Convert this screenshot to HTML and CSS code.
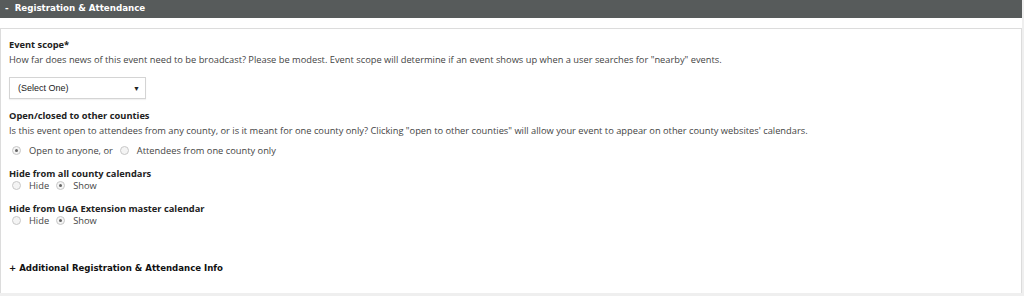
FILE: index.html
```html
<!DOCTYPE html>
<html>
<head>
<meta charset="utf-8">
<link rel="stylesheet" href="styles.css">
</head>
<body>
<div class="wrap">
  <div class="header">-&nbsp; Registration &amp; Attendance</div>
  <div class="panel">
    <div class="field">
      <div class="label">Event scope*</div>
      <div class="desc">How far does news of this event need to be broadcast? Please be modest. Event scope will determine if an event shows up when a user searches for "nearby" events.</div>
      <div class="select"><span>(Select One)</span><span class="caret">&#9660;</span></div>
    </div>
    <div class="field f2">
      <div class="label">Open/closed to other counties</div>
      <div class="desc">Is this event open to attendees from any county, or is it meant for one county only? Clicking "open to other counties" will allow your event to appear on other county websites' calendars.</div>
      <div class="radios r1">
        <span class="radio on"></span><span class="rl">Open to anyone, or</span>
        <span class="radio"></span><span class="rl">Attendees from one county only</span>
      </div>
    </div>
    <div class="field f3">
      <div class="label">Hide from all county calendars</div>
      <div class="radios rs">
        <span class="radio"></span><span class="rl">Hide</span>
        <span class="radio on"></span><span class="rl">Show</span>
      </div>
    </div>
    <div class="field f4">
      <div class="label">Hide from UGA Extension master calendar</div>
      <div class="radios rs">
        <span class="radio"></span><span class="rl">Hide</span>
        <span class="radio on"></span><span class="rl">Show</span>
      </div>
    </div>
    <div class="more">+ Additional Registration &amp; Attendance Info</div>
  </div>
</div>
</body>
</html>
```

FILE: styles.css
```css
html, body { margin: 0; padding: 0; background: #efefef; }
.wrap { width: 1022px; background: #fff; }
.header {
  height: 18px; background: #575b5b; color: #fff;
  font-family: "DejaVu Sans", sans-serif; font-weight: bold; font-size: 8.7px;
  line-height: 17px; padding-left: 5px; box-sizing: border-box;
}
.panel {
  margin-top: 10px; border: 1px solid #dcdcdc; border-bottom: none;
  height: 265px; box-sizing: border-box; padding: 9px 0 0 8px;
  font-family: "Open Sans", sans-serif; color: #333;
}
.label { font-weight: bold; font-size: 9.3px; line-height: 14px; color: #222; }
.desc { font-size: 9.3px; line-height: 14px; margin-top: 1px; color: #444; }
.select {
  margin-top: 10px; width: 137px; height: 22px; box-sizing: border-box;
  border: 1px solid #d4d4d4; display: flex; align-items: center;
  justify-content: space-between; padding: 0 5px 0 8px;
  font-family: "Liberation Sans", sans-serif; font-size: 9px; color: #222;
  box-shadow: 0 1px 1px rgba(0,0,0,0.05);
}
.caret { font-size: 7px; }
.f2 { margin-top: 10px; }
.f3 { margin-top: 10px; }
.f4 { margin-top: 11px; }
.radios { display: flex; align-items: center; height: 12px; font-size: 9.3px; color: #444; }
.r1 { margin-top: 5px; height: 14px; }
.rs { margin-top: -2px; }
.radio {
  width: 9px; height: 9px; border-radius: 50%; border: 1px solid #c8c8c8;
  background: #f4f4f4; box-sizing: border-box; margin: 0 8px 0 3px; position: relative;
}
.radio.on::after {
  content: ""; position: absolute; left: 2px; top: 2px; width: 3px; height: 3px;
  border-radius: 50%; background: #666;
}
.rl { margin-right: 4px; }
.more {
  margin-top: 37px; font-family: "DejaVu Sans", sans-serif; font-weight: bold;
  font-size: 8.6px; color: #111;
}
```
